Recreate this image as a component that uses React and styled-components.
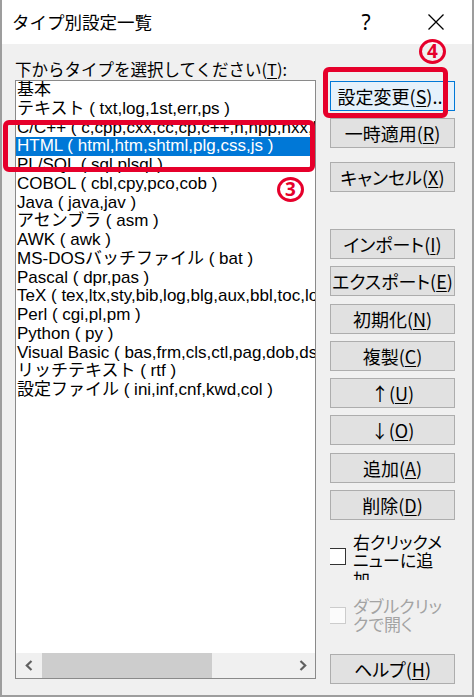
import React from 'react';
import styled, { createGlobalStyle } from 'styled-components';

const RED = '#e6002b';
const UI = `"Noto Sans CJK JP", "Noto Sans", sans-serif`;
const LIST = `"Liberation Sans", "Noto Sans CJK JP", sans-serif`;

const GlobalStyle = createGlobalStyle`
  html, body { margin: 0; padding: 0; background: #f0f0f0; }
  body { font-family: ${UI}; }
  * { box-sizing: border-box; }
`;

const Window = styled.div`
  position: relative;
  width: 474px;
  height: 697px;
  display: flex;
  flex-direction: column;
  background: #f0f0f0;
  border: 2px solid #9d9d9d;
  border-top: none;
  overflow: hidden;
`;

const TitleBar = styled.div`
  height: 44px;
  flex: none;
  display: flex;
  align-items: center;
  background: #fff;
  padding-left: 10px;
`;

const Title = styled.div`
  flex: 1;
  font-family: ${UI};
  font-size: 17.5px;
  line-height: 20px;
  color: #000;
  white-space: nowrap;
`;

const CaptionButton = styled.div`
  width: ${(p) => p.$w}px;
  height: 44px;
  flex: none;
  display: flex;
  align-items: center;
  justify-content: center;
  font-family: "Noto Sans", sans-serif;
  font-size: 21px;
  color: #000;
`;

const Body = styled.div`
  flex: 1;
  min-height: 0;
  display: flex;
  padding: 14px 0 16px 13px;
`;

const LeftPane = styled.div`
  width: 301px;
  flex: none;
  display: flex;
  flex-direction: column;
`;

const Prompt = styled.div`
  height: 22px;
  font-family: ${UI};
  font-size: 16.5px;
  line-height: 22px;
  white-space: nowrap;
  color: #000;
`;

const U = styled.span`
  text-decoration: underline;
  text-underline-offset: 2px;
  text-decoration-thickness: 1px;
`;

const ListBox = styled.div`
  flex: 1;
  min-height: 0;
  display: flex;
  flex-direction: column;
  background: #fff;
  border: 1px solid #8a8a8a;
`;

const Items = styled.div`
  flex: 1;
  min-height: 0;
  overflow: hidden;
`;

const Item = styled.div`
  width: max-content;
  min-width: 100%;
  height: 18.75px;
  padding-left: 1px;
  font-family: ${LIST};
  font-size: 17px;
  line-height: 18.75px;
  white-space: nowrap;
  color: ${(p) => (p.$selected ? '#fff' : '#000')};
  background: ${(p) => (p.$selected ? '#0078d7' : 'transparent')};
`;

const HScroll = styled.div`
  height: 25px;
  flex: none;
  display: grid;
  grid-template-columns: 26px 1fr 25px;
  background: #f0f0f0;
`;

const ScrollArrow = styled.div`
  display: flex;
  align-items: center;
  justify-content: center;
`;

const Track = styled.div`
  display: flex;
`;

const Thumb = styled.div`
  width: 170px;
  background: #cdcdcd;
`;

const RightPane = styled.div`
  width: 125px;
  flex: none;
  margin-left: 14px;
  padding-top: 23px;
  display: flex;
  flex-direction: column;
`;

const Button = styled.button`
  height: 30px;
  flex: none;
  margin: ${(p) => p.$gap || 0}px 0 0;
  padding: 0;
  display: flex;
  align-items: center;
  justify-content: center;
  background: ${(p) => (p.$default ? '#e5f1fb' : '#e1e1e1')};
  border: 1px solid ${(p) => (p.$default ? '#0078d7' : '#adadad')};
  border-radius: 0;
  font-family: ${UI};
  font-size: 18px;
  font-feature-settings: "palt";
  line-height: 22px;
  color: #000;
  white-space: nowrap;
  overflow: hidden;
`;

const CheckRow = styled.div`
  height: ${(p) => p.$h}px;
  flex: none;
  margin-top: ${(p) => p.$gap}px;
  display: flex;
  align-items: center;
  gap: 7px;
  overflow: hidden;
  color: ${(p) => (p.$disabled ? '#a3a3a3' : '#000')};
`;

const Box = styled.span`
  width: 17px;
  height: 17px;
  flex: none;
  margin-left: -1px;
  background: ${(p) => (p.$disabled ? '#fbfbfb' : '#fff')};
  border: 1px solid ${(p) => (p.$disabled ? '#cccccc' : '#333333')};
`;

const CheckText = styled.span`
  align-self: ${(p) => (p.$top ? 'flex-start' : 'center')};
  font-family: ${UI};
  font-size: 17px;
  font-feature-settings: "palt";
  line-height: 18.5px;
  white-space: nowrap;
`;

const Frame = styled.div`
  position: absolute;
  left: ${(p) => p.$x}px;
  top: ${(p) => p.$y}px;
  width: ${(p) => p.$w}px;
  height: ${(p) => p.$h}px;
  border: 5px solid ${RED};
  border-radius: 6px;
  pointer-events: none;
`;

const Marker = styled.div`
  position: absolute;
  left: ${(p) => p.$x}px;
  top: ${(p) => p.$y}px;
  width: 27px;
  height: 25px;
  border: 3px solid ${RED};
  border-radius: 50%;
  display: flex;
  align-items: center;
  justify-content: center;
  font-family: "Noto Sans", sans-serif;
  font-weight: 700;
  font-size: 19px;
  line-height: 1;
  color: ${RED};
`;

const items = [
  '基本',
  'テキスト ( txt,log,1st,err,ps )',
  'C/C++ ( c,cpp,cxx,cc,cp,c++,h,hpp,hxx,hh,hp,h++,rc,dsw,dsp,def,hm,inl,idl,acf,odl )',
  'HTML ( html,htm,shtml,plg,css,js )',
  'PL/SQL ( sql,plsql )',
  'COBOL ( cbl,cpy,pco,cob )',
  'Java ( java,jav )',
  'アセンブラ ( asm )',
  'AWK ( awk )',
  'MS-DOSバッチファイル ( bat )',
  'Pascal ( dpr,pas )',
  'TeX ( tex,ltx,sty,bib,log,blg,aux,bbl,toc,lof,lot,idx,ind,glo )',
  'Perl ( cgi,pl,pm )',
  'Python ( py )',
  'Visual Basic ( bas,frm,cls,ctl,pag,dob,dsr,vb )',
  'リッチテキスト ( rtf )',
  '設定ファイル ( ini,inf,cnf,kwd,col )',
];

const buttons = [
  { label: '設定変更', key: 'S', suffix: '...', gap: 0, def: true },
  { label: '一時適用', key: 'R', gap: 7 },
  { label: 'キャンセル', key: 'X', gap: 14 },
  { label: 'インポート', key: 'I', gap: 37 },
  { label: 'エクスポート', key: 'E', gap: 7.3 },
  { label: '初期化', key: 'N', gap: 7.3 },
  { label: '複製', key: 'C', gap: 7.3 },
  { label: '↑', key: 'U', gap: 7.3 },
  { label: '↓', key: 'O', gap: 7.3 },
  { label: '追加', key: 'A', gap: 7.3 },
  { label: '削除', key: 'D', gap: 7.3 },
];

const Chevron = ({ dir }) => (
  <svg width="8" height="11" viewBox="0 0 8 11">
    <polyline
      points={dir === 'left' ? '6.5,1 1.8,5.5 6.5,10' : '1.5,1 6.2,5.5 1.5,10'}
      fill="none"
      stroke="#606060"
      strokeWidth="2.2"
    />
  </svg>
);

export default function App() {
  return (
    <>
      <GlobalStyle />
      <Window>
        <TitleBar>
          <Title>タイプ別設定一覧</Title>
          <CaptionButton $w={68}>?</CaptionButton>
          <CaptionButton $w={72}>
            <svg width="16" height="16" viewBox="0 0 16 16">
              <path d="M0.5 0.5 L15.5 15.5 M15.5 0.5 L0.5 15.5" stroke="#000" strokeWidth="1.3" fill="none" />
            </svg>
          </CaptionButton>
        </TitleBar>
        <Body>
          <LeftPane>
            <Prompt>
              下からタイプを選択してください(<U>T</U>):
            </Prompt>
            <ListBox>
              <Items>
                {items.map((t, i) => (
                  <Item key={t} $selected={i === 3}>
                    {t}
                  </Item>
                ))}
              </Items>
              <HScroll>
                <ScrollArrow>
                  <Chevron dir="left" />
                </ScrollArrow>
                <Track>
                  <Thumb />
                </Track>
                <ScrollArrow>
                  <Chevron dir="right" />
                </ScrollArrow>
              </HScroll>
            </ListBox>
          </LeftPane>
          <RightPane>
            {buttons.map((b) => (
              <Button key={b.key} $gap={b.gap} $default={b.def}>
                {b.label}(<U>{b.key}</U>){b.suffix || ''}
              </Button>
            ))}
            <CheckRow $h={47} $gap={12.9}>
              <Box />
              <CheckText $top>
                右クリックメ
                <br />
                ニューに追
                <br />加
              </CheckText>
            </CheckRow>
            <CheckRow $h={38} $gap={16.5} $disabled>
              <Box $disabled />
              <CheckText>
                ダブルクリッ
                <br />
                クで開く
              </CheckText>
            </CheckRow>
            <Button $gap={19.5}>
              ヘルプ(<U>H</U>)
            </Button>
          </RightPane>
        </Body>
        <Frame $x={1} $y={120} $w={312} $h={52} />
        <Frame $x={321} $y={67} $w={125} $h={51} />
        <Marker $x={275} $y={177}>3</Marker>
        <Marker $x={417} $y={39}>4</Marker>
      </Window>
    </>
  );
}
